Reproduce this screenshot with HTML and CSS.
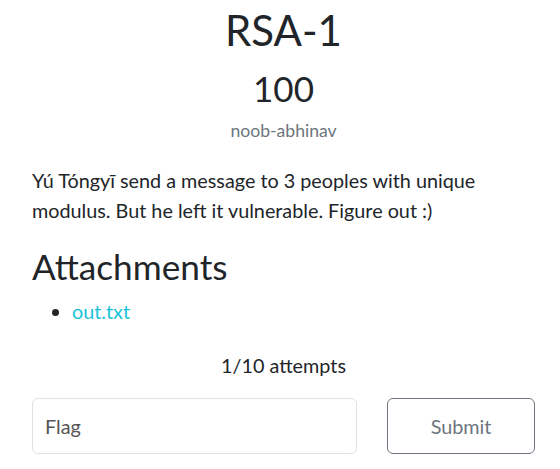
FILE: index.html
```html
<!DOCTYPE html>
<html lang="en">
<head>
<meta charset="utf-8">
<title>RSA-1</title>
<link rel="stylesheet" href="styles.css">
</head>
<body>
<div class="challenge">
  <h2 class="challenge-name">RSA-1</h2>
  <h3 class="challenge-value">100</h3>
  <p class="challenge-author">noob-abhinav</p>
  <p class="challenge-desc">Yú Tóngyī send a message to 3 peoples with unique modulus. But he left it vulnerable. Figure out :)</p>
  <h3 class="attachments-title">Attachments</h3>
  <ul class="attachments">
    <li><a href="#">out.txt</a></li>
  </ul>
  <p class="attempts">1/10 attempts</p>
  <form class="submit-row">
    <input class="flag-input" type="text" placeholder="Flag">
    <button class="submit-btn" type="button">Submit</button>
  </form>
</div>
</body>
</html>
```
FILE: styles.css
```css
html, body {
  margin: 0;
  padding: 0;
  background: #fff;
}

body {
  font-family: Lato, "Open Sans", sans-serif;
  color: #212529;
}

.challenge {
  width: 503px;
  padding: 0 25px 0 32px;
}

.challenge-name {
  margin: 5px 0 0;
  text-align: center;
  font-size: 42px;
  font-weight: 400;
  line-height: 50px;
}

.challenge-value {
  margin: 12px 0 0;
  text-align: center;
  font-size: 35px;
  font-weight: 400;
  line-height: 42px;
}

.challenge-author {
  margin: 9px 0 0;
  text-align: center;
  font-size: 17.6px;
  color: #6c757d;
  line-height: 26.4px;
}

.challenge-desc {
  margin: 22px 0 0;
  font-size: 19.8px;
  line-height: 29.7px;
}

.attachments-title {
  margin: 19px 0 0;
  font-size: 35.2px;
  font-weight: 400;
  line-height: 42.2px;
}

.attachments {
  margin: 10px 0 0;
  padding-left: 40px;
  font-size: 19.8px;
  line-height: 29.7px;
}

.attachments a {
  color: #17c3d8;
  text-decoration: none;
}

.attempts {
  margin: 24px 0 0;
  text-align: center;
  font-size: 19.8px;
  line-height: 29.7px;
}

.submit-row {
  display: grid;
  grid-template-columns: 325px 1fr;
  column-gap: 30px;
  margin-top: 18px;
}

.flag-input {
  box-sizing: border-box;
  height: 56px;
  padding: 0 12px;
  border: 1px solid #dee2e6;
  border-radius: 6px;
  font: 19.8px Lato, sans-serif;
  color: #495057;
  outline: none;
}

.flag-input::placeholder {
  color: #555;
}

.submit-btn {
  box-sizing: border-box;
  height: 56px;
  border: 1px solid #6c757d;
  border-radius: 6px;
  background: #fff;
  font: 19.8px Lato, sans-serif;
  color: #6c757d;
}
```
